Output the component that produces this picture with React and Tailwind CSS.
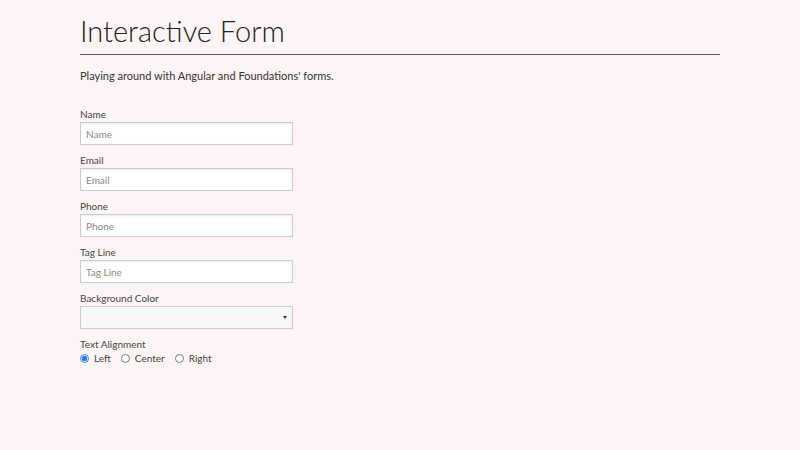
export default function App() {
  const fields = ["Name", "Email", "Phone", "Tag Line"];
  return (
    <div className="min-h-[450px] bg-[#fdf5f5] text-[#222] font-['Lato','Open_Sans',sans-serif]">
      <div className="w-[640px] ml-[80px] pt-[14px]">
        <h1 className="text-[29px] leading-[34px] font-light text-[#222]">Interactive Form</h1>
        <div className="mt-[6px] h-px bg-[#555]"></div>
        <p className="mt-[14px] text-[11px] leading-[14px] text-[#333]">
          Playing around with Angular and Foundations' forms.
        </p>
        <form className="mt-[25px] w-[213px]">
          {fields.map((f) => (
            <div key={f} className="mb-[9px]">
              <label className="block text-[10px] leading-[12px] text-[#444] mb-[2px]">{f}</label>
              <input
                placeholder={f}
                className="block w-full h-[23px] px-[5px] text-[10px] bg-white border border-[#ccc] shadow-[inset_0_1px_2px_rgba(0,0,0,0.08)] placeholder:text-[#888] outline-none"
              />
            </div>
          ))}
          <div className="mb-[9px]">
            <label className="block text-[10px] leading-[12px] text-[#444] mb-[2px]">Background Color</label>
            <div className="relative h-[23px] bg-[#f8f8f8] border border-[#ccc]">
              <span className="absolute right-[5px] top-[9px] w-0 h-0 border-l-[2.5px] border-r-[2.5px] border-t-[3px] border-l-transparent border-r-transparent border-t-[#333]"></span>
            </div>
          </div>
          <div>
            <label className="block text-[10px] leading-[12px] text-[#444] mb-[1px]">Text Alignment</label>
            <div className="flex items-center text-[10px] text-[#444] h-[14px]">
              <input type="radio" name="a" defaultChecked className="w-[9px] h-[9px] m-0 accent-[#2f7de1]" />
              <span className="ml-[5px] mr-[10px]">Left</span>
              <input type="radio" name="a" className="w-[9px] h-[9px] m-0" />
              <span className="ml-[5px] mr-[10px]">Center</span>
              <input type="radio" name="a" className="w-[9px] h-[9px] m-0" />
              <span className="ml-[5px]">Right</span>
            </div>
          </div>
        </form>
      </div>
    </div>
  );
}
